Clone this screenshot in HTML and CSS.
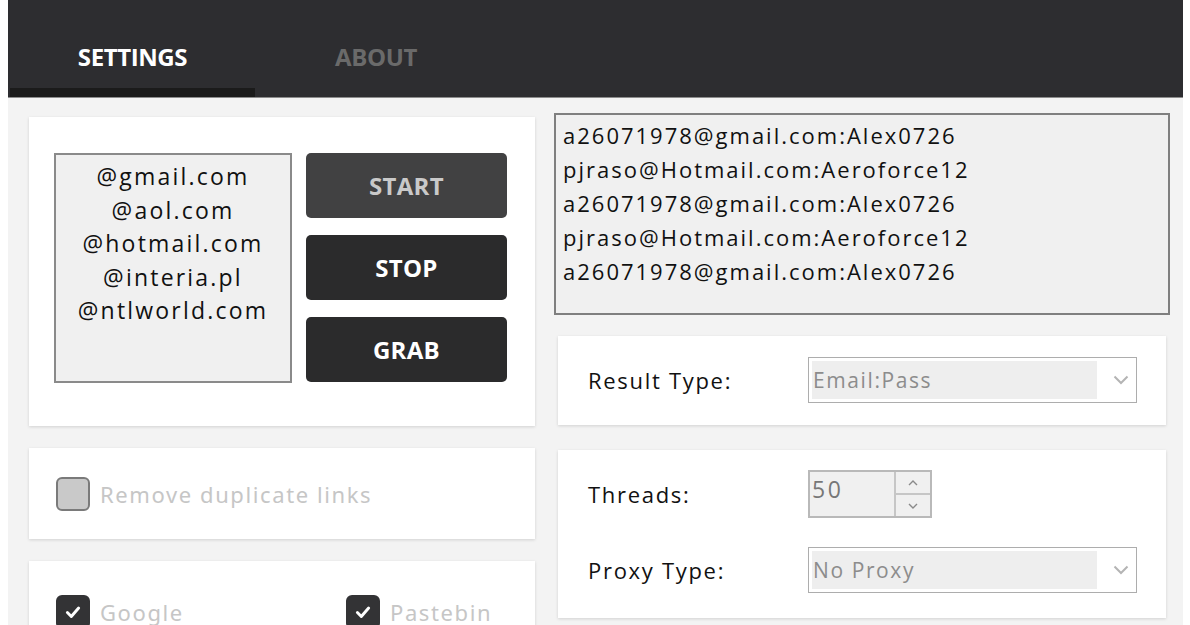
FILE: index.html
```html
<!DOCTYPE html>
<html lang="en">
<head>
    <meta charset="UTF-8">
    <meta name="viewport" content="width=device-width, initial-scale=1.0">
    <title>Email Grabber</title>
    <link rel="stylesheet" href="styles.css">
</head>
<body>
    <div id="window">
        <div class="tabs">
            <div class="tab active">SETTINGS</div>
            <div class="tab">ABOUT</div>
        </div>
        <div class="content">
            <div class="column left-column">
                <div class="card main-card">
                    <div class="domain-list">
                        <div>@gmail.com</div>
                        <div>@aol.com</div>
                        <div>@hotmail.com</div>
                        <div>@interia.pl</div>
                        <div>@ntlworld.com</div>
                    </div>
                    <div class="buttons">
                        <button class="btn btn-start">START</button>
                        <button class="btn">STOP</button>
                        <button class="btn">GRAB</button>
                    </div>
                </div>
                <div class="card check-card">
                    <label class="check">
                        <span class="box"></span>
                        Remove duplicate links
                    </label>
                </div>
                <div class="card check-card sources">
                    <label class="check">
                        <span class="box checked">
                            <svg viewBox="0 0 16 16" width="18" height="18"><path d="M3 8.5 L6.5 12 L13 4.5" fill="none" stroke="#fff" stroke-width="2.6" stroke-linecap="round" stroke-linejoin="round"/></svg>
                        </span>
                        Google
                    </label>
                    <label class="check">
                        <span class="box checked">
                            <svg viewBox="0 0 16 16" width="18" height="18"><path d="M3 8.5 L6.5 12 L13 4.5" fill="none" stroke="#fff" stroke-width="2.6" stroke-linecap="round" stroke-linejoin="round"/></svg>
                        </span>
                        Pastebin
                    </label>
                </div>
            </div>
            <div class="column right-column">
                <div class="results">
                    <div>a26071978@gmail.com:Alex0726</div>
                    <div>pjraso@Hotmail.com:Aeroforce12</div>
                    <div>a26071978@gmail.com:Alex0726</div>
                    <div>pjraso@Hotmail.com:Aeroforce12</div>
                    <div>a26071978@gmail.com:Alex0726</div>
                </div>
                <div class="card form-card result-card">
                    <div class="form-row">
                        <span class="form-label">Result Type:</span>
                        <div class="select">
                            <span class="select-value">Email:Pass</span>
                            <svg class="chevron" viewBox="0 0 16 10" width="16" height="10"><path d="M1.5 1.5 L8 8 L14.5 1.5" fill="none" stroke="#b4b4b4" stroke-width="2"/></svg>
                        </div>
                    </div>
                </div>
                <div class="card form-card">
                    <div class="form-row">
                        <span class="form-label">Threads:</span>
                        <div class="spinner">
                            <span class="spinner-value">50</span>
                            <div class="spinner-buttons">
                                <span><svg viewBox="0 0 10 6" width="10" height="6"><path d="M1 5 L5 1 L9 5" fill="none" stroke="#8a8a8a" stroke-width="1.4"/></svg></span>
                                <span><svg viewBox="0 0 10 6" width="10" height="6"><path d="M1 1 L5 5 L9 1" fill="none" stroke="#8a8a8a" stroke-width="1.4"/></svg></span>
                            </div>
                        </div>
                    </div>
                    <div class="form-row">
                        <span class="form-label">Proxy Type:</span>
                        <div class="select">
                            <span class="select-value">No Proxy</span>
                            <svg class="chevron" viewBox="0 0 16 10" width="16" height="10"><path d="M1.5 1.5 L8 8 L14.5 1.5" fill="none" stroke="#b4b4b4" stroke-width="2"/></svg>
                        </div>
                    </div>
                </div>
            </div>
        </div>
    </div>
</body>
</html>
```

FILE: styles.css
```css
body {
    margin: 0;
    background-color: #fff;
    font-family: "Open Sans", "Noto Sans", sans-serif;
    overflow: hidden;
}
#window {
    margin: 0 7px 0 8px;
    height: 625px;
    background-color: #f3f3f3;
}
.tabs {
    display: flex;
    height: 97px;
    background-color: #2d2d30;
    border-bottom: 1px solid #8c8c8c;
}
.tab {
    width: 247px;
    padding-top: 40px;
    box-sizing: border-box;
    text-align: center;
    font-size: 24px;
    font-weight: bold;
    letter-spacing: -0.4px;
    color: #6a6a6a;
}
.tab.active {
    color: #fff;
    border-bottom: 9px solid #1b1b1b;
    margin-left: 2px;
    width: 245px;
}
.tab + .tab {
    width: 242px;
}
.content {
    display: flex;
    gap: 23px;
    padding: 15px 17px 0 21px;
}
.column {
    display: flex;
    flex-direction: column;
}
.left-column {
    width: 506px;
    padding-top: 4px;
    gap: 22px;
}
.right-column {
    width: 608px;
}
.card {
    background-color: #fff;
    box-shadow: 0 1px 3px rgba(0, 0, 0, 0.14);
    box-sizing: border-box;
}

/* domains + buttons */
.main-card {
    display: flex;
    gap: 14px;
    height: 309px;
    padding: 36px 28px 0 25px;
}
.domain-list {
    width: 238px;
    height: 230px;
    box-sizing: border-box;
    border: 2px solid #8a8a8a;
    background-color: #f0f0f0;
    text-align: center;
    font-size: 23px;
    letter-spacing: 2.2px;
    line-height: 33.5px;
    padding-top: 5px;
    color: #111;
}
.buttons {
    flex: 1;
    display: flex;
    flex-direction: column;
    gap: 17px;
}
.btn {
    height: 65px;
    border: none;
    border-radius: 5px;
    background-color: #2b2b2c;
    color: #fff;
    font-family: "Open Sans", sans-serif;
    font-size: 24px;
    font-weight: bold;
    letter-spacing: 0.3px;
}
.btn-start {
    background-color: #414142;
    color: #c9c9c9;
}

/* checkboxes */
.check-card {
    height: 91px;
    padding: 0 27px;
    display: flex;
    align-items: center;
}
.check {
    display: flex;
    align-items: center;
    gap: 10px;
    font-family: "Noto Sans", sans-serif;
    font-size: 22px;
    letter-spacing: 1.6px;
    color: #c6c6c6;
}
.box {
    width: 30px;
    height: 30px;
    border: 2px solid #7a7a7a;
    border-radius: 6px;
    background-color: #c9c9c9;
    display: flex;
    align-items: center;
    justify-content: center;
}
.box.checked {
    background-color: #333335;
    border-color: #333335;
}
.sources {
    display: grid;
    grid-template-columns: 290px 1fr;
    align-items: start;
    padding-top: 34px;
}

/* results output */
.results {
    margin: 0 -4px;
    height: 202px;
    box-sizing: border-box;
    border: 2px solid #7f7f7f;
    background-color: #f0f0f0;
    padding: 3px 0 0 7px;
    font-size: 22px;
    letter-spacing: 2px;
    line-height: 34px;
    color: #111;
}

/* form cards */
.form-card {
    margin-top: 21px;
    padding: 20px 28px 0 30px;
    height: 168px;
}
.result-card {
    height: 89px;
}
.form-card + .form-card {
    margin-top: 25px;
}
.form-row {
    display: flex;
    align-items: center;
    height: 48px;
    margin-bottom: 28px;
}
.form-label {
    width: 220px;
    font-size: 22px;
    letter-spacing: 1.7px;
    color: #111;
}
.select {
    width: 329px;
    height: 46px;
    box-sizing: border-box;
    border: 1px solid #adadad;
    background-color: #fff;
    padding: 3px;
    display: flex;
    align-items: center;
}
.select-value {
    flex: 1;
    align-self: stretch;
    display: flex;
    align-items: center;
    padding-left: 1px;
    margin-right: 16px;
    background-color: #eeeeee;
    font-size: 21px;
    letter-spacing: 1.6px;
    color: #8c8c8c;
}
.chevron {
    margin-right: 4px;
}
.spinner {
    width: 124px;
    height: 48px;
    box-sizing: border-box;
    border: 2px solid #b9b9b9;
    background-color: #f0f0f0;
    display: flex;
}
.spinner-value {
    flex: 1;
    padding: 1px 0 0 2px;
    font-size: 23px;
    letter-spacing: 2.5px;
    color: #777;
}
.spinner-buttons {
    width: 34px;
    border-left: 2px solid #c6c6c6;
    display: flex;
    flex-direction: column;
}
.spinner-buttons span {
    flex: 1;
    display: flex;
    align-items: center;
    justify-content: center;
}
.spinner-buttons span + span {
    border-top: 2px solid #c6c6c6;
}
```
